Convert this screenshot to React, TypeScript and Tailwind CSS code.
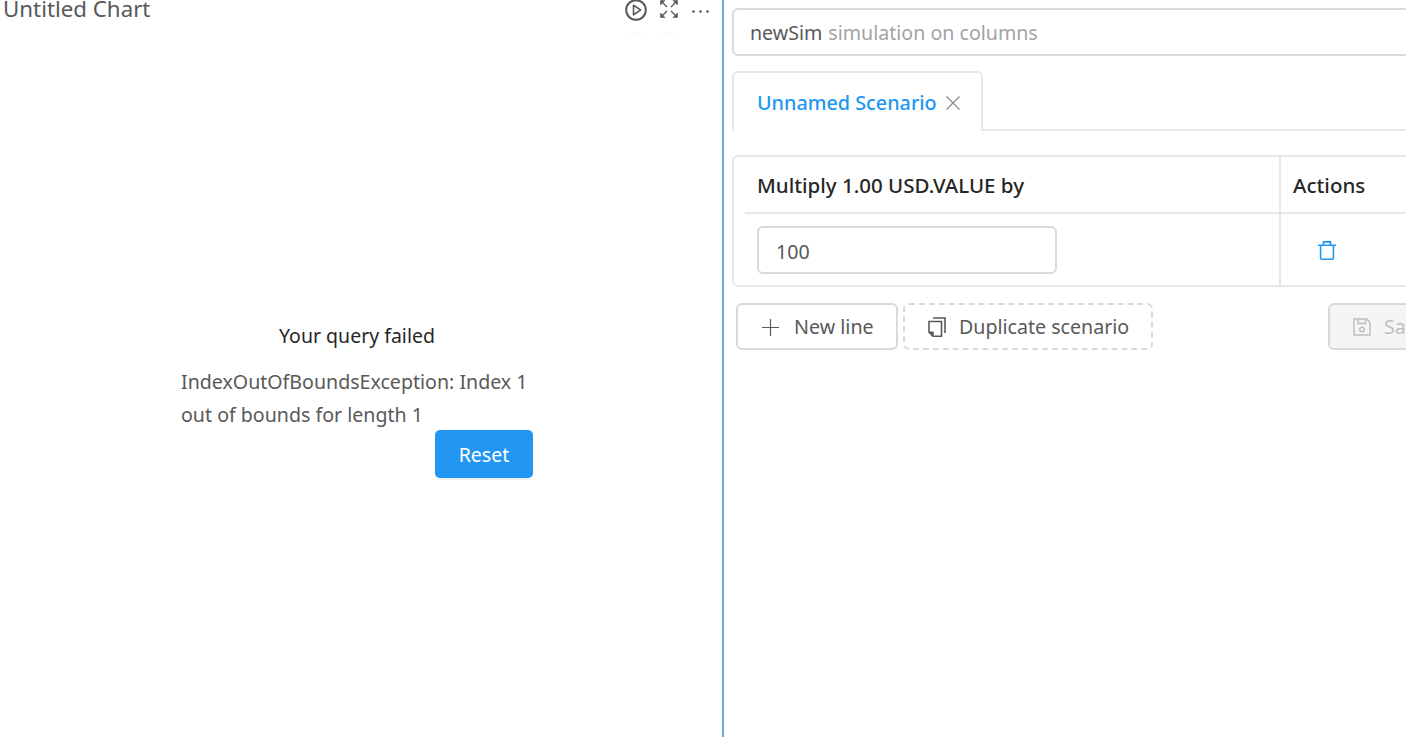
const font = "font-['Noto_Sans','Open_Sans',sans-serif]";

function PlayIcon() {
  return (
    <svg viewBox="0 0 22 22" className="h-[22px] w-[22px]" fill="none" stroke="currentColor" strokeWidth="2">
      <circle cx="11" cy="11" r="9.8" />
      <path d="M8.5 6.2 15.5 11 8.5 15.8Z" strokeWidth="1.6" strokeLinejoin="round" />
    </svg>
  );
}

function ExpandIcon() {
  return (
    <svg viewBox="0 0 18 18" className="h-[18px] w-[18px]" fill="currentColor" stroke="currentColor" strokeWidth="1.4">
      <path d="M2.5 2.5 7 7M15.5 2.5 11 7M2.5 15.5 7 11M15.5 15.5 11 11" />
      <path d="M.5.5H5L.5 5ZM17.5.5H13L17.5 5ZM.5 17.5H5L.5 13ZM17.5 17.5H13L17.5 13Z" strokeWidth="0.6" />
    </svg>
  );
}

function DotsIcon() {
  return (
    <svg viewBox="0 0 17 3" className="h-[3px] w-[17px]" fill="currentColor">
      <circle cx="1.5" cy="1.5" r="1.3" />
      <circle cx="8.5" cy="1.5" r="1.3" />
      <circle cx="15.5" cy="1.5" r="1.3" />
    </svg>
  );
}

function CloseIcon() {
  return (
    <svg viewBox="0 0 14 14" className="h-[14px] w-[14px] text-[#8c8c8c]" fill="none" stroke="currentColor" strokeWidth="1.3">
      <path d="M.5.5 13.5 13.5M13.5.5.5 13.5" />
    </svg>
  );
}

function TrashIcon() {
  return (
    <svg viewBox="0 0 18 19" className="h-[19px] w-[18px] text-[#2196f3]" fill="none" stroke="currentColor" strokeWidth="1.6">
      <path d="M0 4.2H18M5.5 4V.9H12.5V4M2.6 4.2V17A1.2 1.2 0 0 0 3.8 18.2H14.2A1.2 1.2 0 0 0 15.4 17V4.2" />
    </svg>
  );
}

function PlusIcon() {
  return (
    <svg viewBox="0 0 17 17" className="h-[17px] w-[17px]" fill="none" stroke="currentColor" strokeWidth="1.2">
      <path d="M8.5 0V17M0 8.5H17" />
    </svg>
  );
}

function DuplicateIcon() {
  return (
    <svg viewBox="0 0 18 20" className="h-[20px] w-[18px]" fill="none" stroke="currentColor" strokeWidth="1.6">
      <path d="M5 1H17V16" />
      <path d="M1 4.5H13.5V19.2H5L1 15.2Z" />
      <path d="M1 15H5.2V19" fill="currentColor" strokeWidth="1" />
    </svg>
  );
}

function SaveIcon() {
  return (
    <svg viewBox="0 0 18 18" className="h-[18px] w-[18px]" fill="none" stroke="#bfbfbf" strokeWidth="1.5">
      <path d="M1 1H13.5L17 4.5V17H1Z" />
      <path d="M5 1V5.5H12.5V1" />
      <circle cx="9" cy="11.5" r="2.3" />
    </svg>
  );
}

function ChartPanel() {
  return (
    <section className="flex h-full w-[722px] shrink-0 flex-col">
      {/* Title is cut off by the top of the window */}
      <header className="-mt-[7px] flex h-[41px] items-start justify-between pl-[3px] pr-[12px]">
        <h1 className="text-[22.3px] leading-[32px] text-[#595959]">Untitled Chart</h1>
        <div className="flex items-start text-[#595959]">
          <div className="flex h-[40px] w-[24px] justify-center rounded-[6px] pt-[6px] shadow-[0_1px_1px_rgba(0,0,0,0.03)]">
            <PlayIcon />
          </div>
          <div className="ml-[10px] flex h-[40px] w-[22px] justify-center rounded-[6px] pt-[7px] shadow-[0_1px_1px_rgba(0,0,0,0.03)]">
            <ExpandIcon />
          </div>
          <div className="ml-[12px] w-[18px] pt-[17px]">
            <DotsIcon />
          </div>
        </div>
      </header>

      <div className="ml-[181px] mt-[287px] w-[352px]">
        <p className="text-center text-[19.5px] leading-[30px] text-[#262626]">Your query failed</p>
        <p className="mt-[14px] whitespace-nowrap text-[19.6px] leading-[33px] text-[#595959]">
          IndexOutOfBoundsException: Index 1
          <br />
          out of bounds for length 1
        </p>
        <div className="-mt-[1px] flex justify-end">
          <button className="h-[48px] w-[98px] rounded-[5px] bg-[#2196f3] pt-[2px] text-[19.5px] text-white shadow-[0_2px_0_rgba(0,0,0,0.05)]">
            Reset
          </button>
        </div>
      </div>
    </section>
  );
}

function ScenarioPanel() {
  return (
    <section className="h-full w-[800px] shrink-0 border-l-2 border-[#6fa8dc] pl-[8px] pt-[8px]">
      <div className="flex h-[48px] items-center rounded-[6px] border-2 border-[#d9d9d9] pl-[16px] pt-[2px] text-[19.6px]">
        <span className="text-[#595959]">newSim</span>
        <span className="ml-[6px] text-[#a3a3a3]">simulation on columns</span>
      </div>

      {/* Tabs */}
      <div className="mt-[15px] flex h-[60px] border-b-2 border-[#e8e8e8]">
        <div className="-mb-[2px] flex h-[60px] w-[251px] items-center gap-[9px] rounded-t-[6px] border-2 border-b-0 border-[#e8e8e8] bg-white pl-[23px] pt-[2px]">
          <span className="text-[19.8px] font-medium text-[#2196f3]">Unnamed Scenario</span>
          <CloseIcon />
        </div>
      </div>

      {/* Table */}
      <div className="mt-[24px] h-[132px] rounded-[6px] border-2 border-[#e8e8e8]">
        <div className="flex h-[57px] pl-[11px]">
          <div className="flex flex-1 items-center border-b-2 border-[#e8e8e8] pl-[12px] pt-[1px] text-[20.5px] font-medium text-[#262626]">
            Multiply 1.00 USD.VALUE by
          </div>
          <div className="flex w-[241px] items-center border-b-2 border-l-2 border-[#e8e8e8] pl-[12px] pt-[1px] text-[20.5px] font-medium text-[#262626]">
            Actions
          </div>
        </div>
        <div className="flex h-[71px] pl-[11px]">
          <div className="flex flex-1 items-center pl-[12px] pt-[1px]">
            <div className="flex h-[48px] w-[300px] items-center rounded-[6px] border-2 border-[#d9d9d9] pl-[17px] pt-[3px] text-[19.6px] text-[#595959]">
              100
            </div>
          </div>
          <div className="flex w-[241px] items-center border-l-2 border-[#e8e8e8] pl-[37px] pt-[2px]">
            <TrashIcon />
          </div>
        </div>
      </div>

      {/* Actions */}
      <div className="mt-[16px] flex h-[47px] pl-[4px]">
        <button className="flex w-[162px] shrink-0 items-center gap-[15px] rounded-[6px] border-2 border-[#d9d9d9] pl-[24px] pt-[1px] text-[19.7px] text-[#595959]">
          <PlusIcon />
          New line
        </button>
        <button className="ml-[5px] flex w-[250px] shrink-0 items-center gap-[13px] rounded-[6px] border-2 border-dashed border-[#d9d9d9] pl-[23px] pt-[1px] text-[19.6px] text-[#595959]">
          <DuplicateIcon />
          Duplicate scenario
        </button>
        <button className="ml-[175px] flex w-[200px] shrink-0 items-center gap-[13px] rounded-[6px] border-2 border-[#d9d9d9] bg-[#f5f5f5] pl-[23px] pt-[1px] text-[19.6px] text-[#bfbfbf]">
          <SaveIcon />
          Save
        </button>
      </div>
    </section>
  );
}

export default function App() {
  return (
    <main className={`flex h-[737px] w-[1406px] overflow-hidden bg-white ${font}`}>
      <ChartPanel />
      <ScenarioPanel />
    </main>
  );
}
